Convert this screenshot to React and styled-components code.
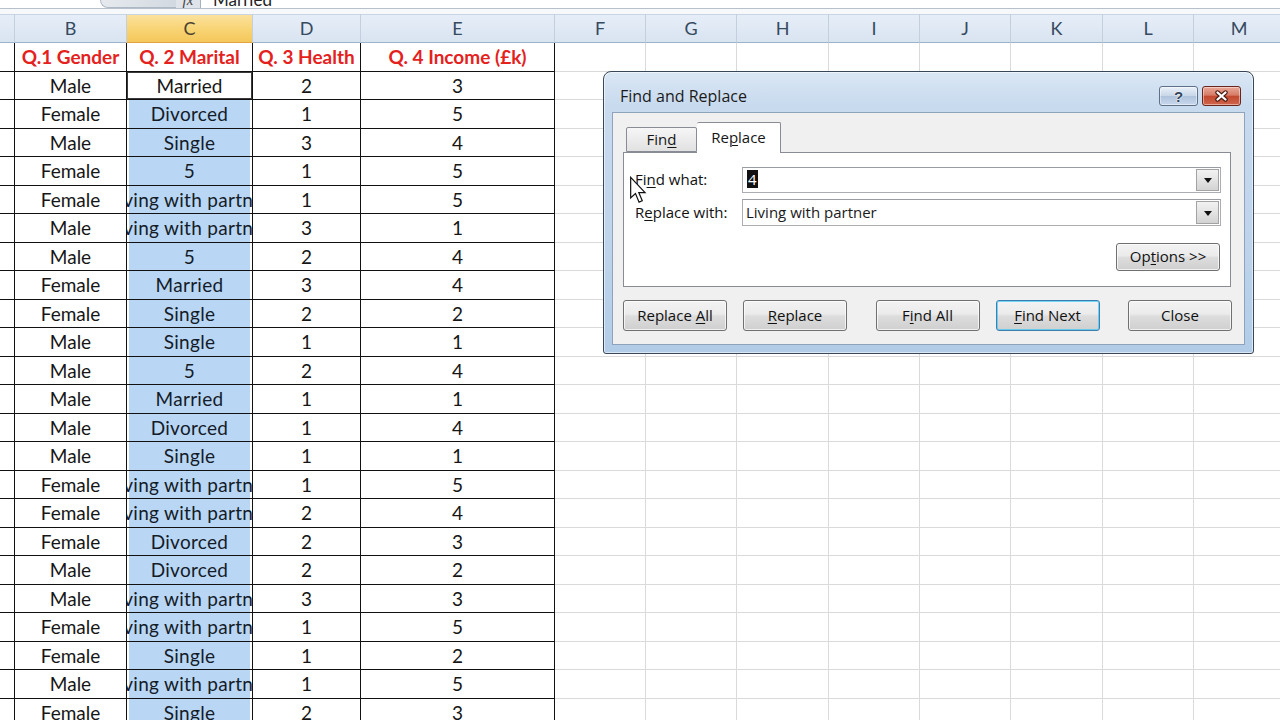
import styled, { createGlobalStyle, css } from "styled-components";

const GlobalStyle = createGlobalStyle`
  html, body {
    margin: 0;
    padding: 0;
    background: #fff;
    overflow: hidden;
  }
  body {
    font-family: "Open Sans", "Liberation Sans", sans-serif;
  }
`;

const COLS = [15, 112, 126, 108, 194, 91, 91, 92, 91, 91, 92, 91, 91];
const LETTERS = ["", "B", "C", "D", "E", "F", "G", "H", "I", "J", "K", "L", "M"];
const LIVING = "Living with partner";

const rows = [
  ["Male", "Married", 2, 3],
  ["Female", "Divorced", 1, 5],
  ["Male", "Single", 3, 4],
  ["Female", "5", 1, 5],
  ["Female", LIVING, 1, 5],
  ["Male", LIVING, 3, 1],
  ["Male", "5", 2, 4],
  ["Female", "Married", 3, 4],
  ["Female", "Single", 2, 2],
  ["Male", "Single", 1, 1],
  ["Male", "5", 2, 4],
  ["Male", "Married", 1, 1],
  ["Male", "Divorced", 1, 4],
  ["Male", "Single", 1, 1],
  ["Female", LIVING, 1, 5],
  ["Female", LIVING, 2, 4],
  ["Female", "Divorced", 2, 3],
  ["Male", "Divorced", 2, 2],
  ["Male", LIVING, 3, 3],
  ["Female", LIVING, 1, 5],
  ["Female", "Single", 1, 2],
  ["Male", LIVING, 1, 5],
  ["Female", "Single", 2, 3],
];

const Screen = styled.div`
  position: relative;
  width: 1280px;
  height: 720px;
  overflow: hidden;
  background: #fff;
`;

/* formula bar, cut off at the top of the frame */
const FormulaBar = styled.div`
  height: 8px;
  display: flex;
  align-items: flex-end;
  overflow: hidden;
  background: #fff;
  border-bottom: 1px solid #b7c1cd;
`;

const NameBoxTail = styled.div`
  width: 76px;
  height: 8px;
  margin-left: 100px;
  box-sizing: border-box;
  background: linear-gradient(90deg, #e6eaef, #d3d9e1);
  border: 1px solid #aeb8c5;
  border-top: none;
  border-right: none;
  border-radius: 0 0 0 12px;
`;

const FxMark = styled.div`
  width: 24px;
  height: 8px;
  display: flex;
  align-items: flex-end;
  justify-content: center;
  background: #dfe4ea;
  border-right: 1px solid #a9b3bf;
  font: italic 15px/16px "Liberation Serif", serif;
  color: #444;
`;

const FormulaText = styled.div`
  padding-left: 12px;
  font: 17px/16px Lato, "Open Sans", sans-serif;
  color: #222;
`;

const BarGap = styled.div`
  height: 5px;
  background: #f6f8fa;
`;

const Sheet = styled.div`
  display: grid;
  grid-template-columns: ${COLS.map((c) => `${c}px`).join(" ")};
  grid-template-rows: 29px;
  grid-auto-rows: 28.5px;
`;

const ColHead = styled.div`
  display: flex;
  align-items: center;
  justify-content: center;
  font: 18px Lato, "Open Sans", sans-serif;
  color: #364a60;
  border-right: 1px solid #c3cfdc;
  border-bottom: 1px solid #9eb3c9;
  box-shadow: inset 0 1px 0 #c9d5e3;
  background: linear-gradient(#e6eef8, #d9e4f1);
  ${(p) =>
    p.$selected &&
    css`
      background: linear-gradient(#fbe2a0, #f8d577 50%, #f4c75a);
      border-bottom-color: #e3a33f;
      color: #4a4130;
    `}
`;

const Cell = styled.div`
  display: flex;
  align-items: center;
  justify-content: center;
  overflow: hidden;
  white-space: nowrap;
  font: 19px Lato, "Open Sans", sans-serif;
  color: #161616;
  background: #fff;
  border-right: 1px solid ${(p) => (p.$ruled ? "#111" : "#dadada")};
  border-bottom: 1px solid ${(p) => (p.$ruled ? "#111" : "#dadada")};
  ${(p) =>
    p.$selected &&
    css`
      background: #b9d6f5;
      color: #141c28;
      letter-spacing: 0.3px;
      box-shadow: inset 2px 0 0 #fff, inset -2px 0 0 #fff;
    `}
  ${(p) =>
    p.$active &&
    css`
      box-shadow: inset 0 0 0 1px #3a3a3a, inset 0 0 0 2px #fff;
    `}
`;

const TitleCell = styled(Cell)`
  color: #e4211c;
  font-weight: 700;
`;

/* dialog window */
const Dialog = styled.div`
  position: absolute;
  left: 603px;
  top: 71px;
  width: 651px;
  height: 283px;
  box-sizing: border-box;
  border: 1px solid #394858;
  border-radius: 8px 8px 3px 3px;
  background: linear-gradient(180deg, #dae7f5 0%, #c8daee 12%, #bed4eb 60%, #b2cce8 100%);
  box-shadow: inset 0 0 0 1px rgba(255, 255, 255, 0.55);
  padding: 0 8px 8px 8px;
  display: flex;
  flex-direction: column;
  font-family: "Open Sans", "Liberation Sans", sans-serif;
  color: #161616;
`;

const TitleBar = styled.div`
  height: 40px;
  box-sizing: border-box;
  padding: 8px 4px 0 8px;
  display: flex;
  align-items: center;
`;

const Title = styled.div`
  flex: 1;
  font-size: 16px;
  color: #1b1b1b;
`;

const CaptionButton = styled.div`
  width: 39px;
  height: 20px;
  box-sizing: border-box;
  border-radius: 3px;
  display: flex;
  align-items: center;
  justify-content: center;
  margin-left: 4px;
  border: 1px solid ${(p) => (p.$close ? "#6a241a" : "#5f7189")};
  background: ${(p) =>
    p.$close
      ? "linear-gradient(#eaa898, #d67c67 45%, #c3492f 52%, #cf654c 100%)"
      : "linear-gradient(#eaf1f9, #c9d7e8 48%, #afc3dc 52%, #c8d8ec 100%)"};
  box-shadow: inset 0 0 0 1px rgba(255, 255, 255, 0.45);
  font: bold 15px/1 "Liberation Sans", sans-serif;
  color: #33455c;
  text-shadow: 0 0 2px #fff, 0 0 1px #fff;
`;

const Client = styled.div`
  flex: 1;
  background: #f0f0f0;
  border: 1px solid #8fa4bc;
  display: flex;
  flex-direction: column;
`;

const TabRow = styled.div`
  height: 30px;
  margin: 9px 0 0 13px;
  display: flex;
  align-items: flex-end;
`;

const Tab = styled.div`
  box-sizing: border-box;
  height: ${(p) => (p.$active ? "31px" : "25px")};
  width: ${(p) => (p.$active ? "84px" : "71px")};
  border: 1px solid #898c95;
  border-bottom: ${(p) => (p.$active ? "none" : "1px solid #898c95")};
  border-left: ${(p) => (p.$active ? "none" : "1px solid #898c95")};
  border-radius: 2px 2px 0 0;
  background: ${(p) => (p.$active ? "#fff" : "linear-gradient(#f6f6f6, #e1e1e1)")};
  margin-bottom: ${(p) => (p.$active ? "-1px" : "0")};
  position: relative;
  z-index: ${(p) => (p.$active ? 1 : 0)};
  display: flex;
  align-items: center;
  justify-content: center;
  font-size: 15px;
  padding-bottom: 2px;
`;

const Panel = styled.div`
  height: 135px;
  box-sizing: border-box;
  margin: 0 13px 0 10px;
  background: #fff;
  border: 1px solid #898c95;
  padding: 14px 9px 0 11px;
  display: grid;
  grid-template-columns: 107px 1fr;
  grid-template-rows: 26px 27px auto;
  row-gap: 6px;
  align-items: center;
`;

const Label = styled.div`
  font-size: 15px;
  color: #111;
  padding-bottom: 2px;
`;

const Combo = styled.div`
  height: 100%;
  box-sizing: border-box;
  border: 1px solid #abadb3;
  border-top-color: #9a9ca3;
  background: #fff;
  display: flex;
  align-items: center;
  padding-left: 3px;
  font-size: 15px;
  color: #1a1a1a;
`;

const ComboText = styled.div`
  flex: 1;
  display: flex;
  align-items: center;
  padding-bottom: 2px;
`;

const Picked = styled.span`
  background: #111;
  color: #fff;
  padding: 0 1px;
  margin-left: 1px;
  line-height: 18px;
`;

const DropButton = styled.div`
  width: 23px;
  height: calc(100% - 2px);
  margin-right: 1px;
  box-sizing: border-box;
  border: 1px solid #a3a3a3;
  background: linear-gradient(#f2f2f2, #e3e3e3 50%, #d3d3d3);
  display: flex;
  align-items: center;
  justify-content: center;

  &::after {
    content: "";
    border-left: 4px solid transparent;
    border-right: 4px solid transparent;
    border-top: 5px solid #111;
    margin-top: 1px;
  }
`;

const Button = styled.div`
  width: 104px;
  height: ${(p) => (p.$short ? "28px" : "31px")};
  box-sizing: border-box;
  border: 1px solid ${(p) => (p.$focus ? "#3c7fb1" : "#707070")};
  border-radius: 3px;
  background: linear-gradient(#f3f3f3, #ebebeb 45%, #dddddd 52%, #cfcfcf);
  box-shadow: inset 0 0 0 1px
    ${(p) => (p.$focus ? "rgba(72, 200, 246, 0.75)" : "rgba(255, 255, 255, 0.7)")};
  display: flex;
  align-items: center;
  justify-content: center;
  padding-bottom: 2px;
  font-size: 15px;
  color: #111;
`;

const OptionsButton = styled(Button)`
  grid-column: 1 / span 2;
  justify-self: end;
  align-self: start;
  margin: 11px 1px 0 0;
`;

const ButtonRow = styled.div`
  margin: 13px 12px 0 10px;
  display: flex;
  justify-content: space-between;
`;

const ButtonPair = styled.div`
  display: flex;
  gap: 16px;
`;

const Key = styled.u`
  text-decoration-thickness: 1px;
  text-underline-offset: 2px;
`;

const Pointer = styled.svg`
  position: absolute;
  left: 629px;
  top: 176px;
`;

const CloseGlyph = () => (
  <svg width="15" height="12" viewBox="0 0 15 12">
    <path d="M3.5 2.5 L11.5 9.5 M11.5 2.5 L3.5 9.5" stroke="#4a1a12" strokeWidth="4.4" strokeLinecap="round" />
    <path d="M3.5 2.5 L11.5 9.5 M11.5 2.5 L3.5 9.5" stroke="#fff" strokeWidth="2.3" strokeLinecap="round" />
  </svg>
);

export default function App() {
  return (
    <Screen>
      <GlobalStyle />
      <FormulaBar>
        <NameBoxTail />
        <FxMark>fx</FxMark>
        <FormulaText>Married</FormulaText>
      </FormulaBar>
      <BarGap />

      <Sheet>
        {LETTERS.map((l, i) => (
          <ColHead key={`h${i}`} $selected={l === "C"}>
            {l}
          </ColHead>
        ))}

        <TitleCell $ruled />
        <TitleCell $ruled>Q.1 Gender</TitleCell>
        <TitleCell $ruled>Q. 2 Marital</TitleCell>
        <TitleCell $ruled>Q. 3 Health</TitleCell>
        <TitleCell $ruled>Q. 4 Income (£k)</TitleCell>
        {COLS.slice(5).map((_, i) => (
          <Cell key={`t${i}`} />
        ))}

        {rows.map((r, ri) => [
          <Cell key={`a${ri}`} $ruled />,
          <Cell key={`b${ri}`} $ruled>
            {r[0]}
          </Cell>,
          <Cell key={`c${ri}`} $ruled $selected={ri > 0} $active={ri === 0}>
            {r[1]}
          </Cell>,
          <Cell key={`d${ri}`} $ruled>
            {r[2]}
          </Cell>,
          <Cell key={`e${ri}`} $ruled>
            {r[3]}
          </Cell>,
          ...COLS.slice(5).map((_, i) => <Cell key={`x${ri}-${i}`} />),
        ])}
      </Sheet>

      <Dialog>
        <TitleBar>
          <Title>Find and Replace</Title>
          <CaptionButton>?</CaptionButton>
          <CaptionButton $close>
            <CloseGlyph />
          </CaptionButton>
        </TitleBar>
        <Client>
          <TabRow>
            <Tab>
              Fin<Key>d</Key>
            </Tab>
            <Tab $active>
              Re<Key>p</Key>lace
            </Tab>
          </TabRow>
          <Panel>
            <Label>
              Fi<Key>n</Key>d what:
            </Label>
            <Combo>
              <ComboText>
                <Picked>4</Picked>
              </ComboText>
              <DropButton />
            </Combo>
            <Label>
              R<Key>e</Key>place with:
            </Label>
            <Combo>
              <ComboText>Living with partner</ComboText>
              <DropButton />
            </Combo>
            <OptionsButton $short>
              Op<Key>t</Key>ions &gt;&gt;
            </OptionsButton>
          </Panel>
          <ButtonRow>
            <ButtonPair>
              <Button>
                Replace&nbsp;<Key>A</Key>ll
              </Button>
              <Button>
                <Key>R</Key>eplace
              </Button>
            </ButtonPair>
            <ButtonPair>
              <Button>
                F<Key>i</Key>nd All
              </Button>
              <Button $focus>
                <Key>F</Key>ind Next
              </Button>
            </ButtonPair>
            <Button>Close</Button>
          </ButtonRow>
        </Client>
      </Dialog>

      <Pointer width="18" height="28" viewBox="0 0 13 21">
        <path
          d="M1 1 L1 16.5 L4.6 13.2 L7.3 19.6 L9.7 18.6 L7.1 12.4 L11.8 12.4 Z"
          fill="#fff"
          stroke="#111"
          strokeWidth="0.9"
          strokeLinejoin="miter"
        />
      </Pointer>
    </Screen>
  );
}
